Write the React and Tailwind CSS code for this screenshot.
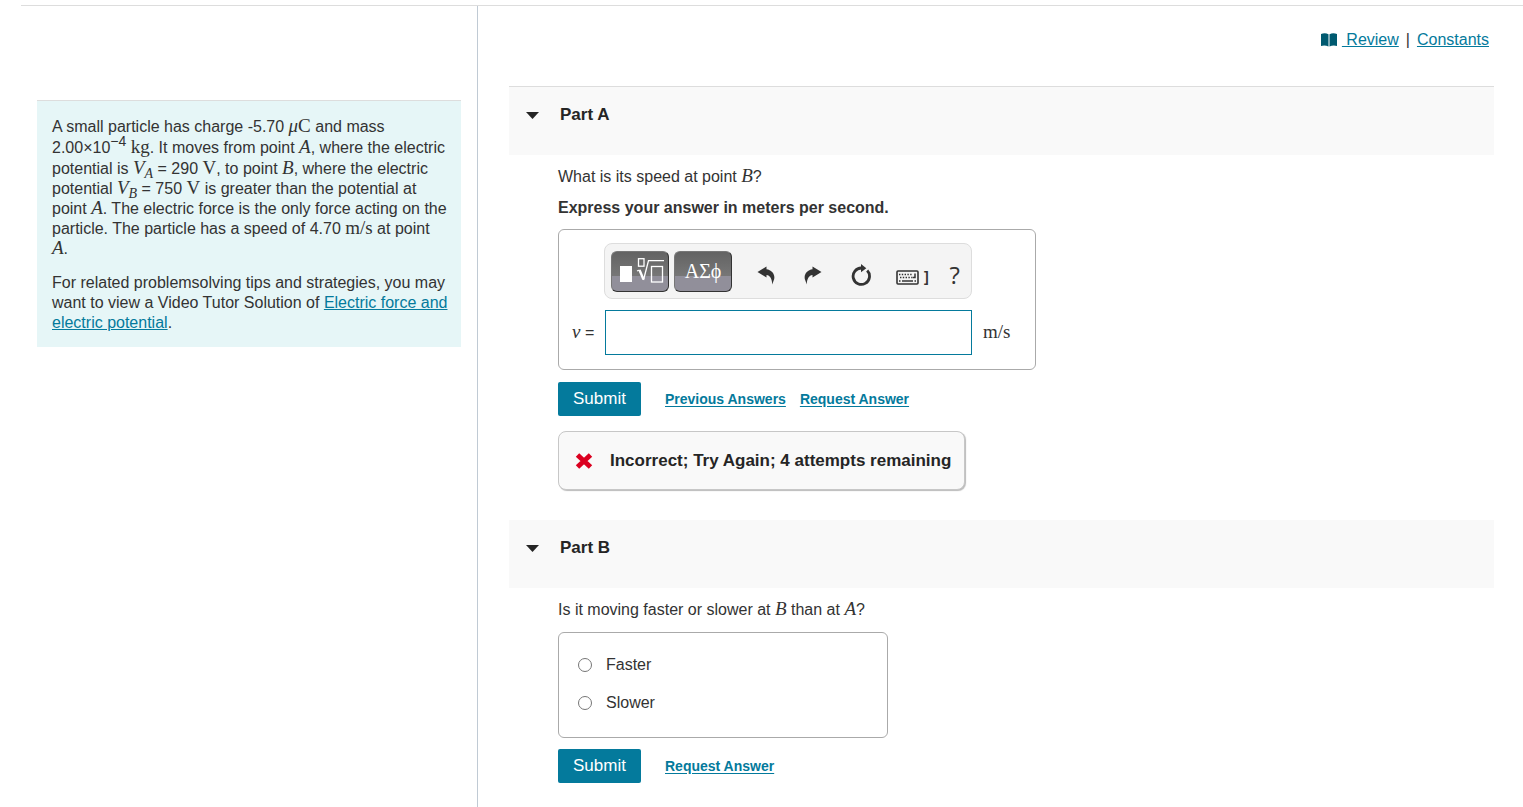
import React, { useState } from 'react';

// Math symbols are set in serif, variables in italics
const Sym = ({ children }) => (
  <span className="font-['Liberation_Serif',serif] text-[19px] leading-4">{children}</span>
);

const Var = ({ children, sub }) => (
  <i className="font-['Liberation_Serif',serif] text-[19px] leading-4">
    {children}
    {sub && <sub className="text-[14px]">{sub}</sub>}
  </i>
);

const Link = ({ children }) => (
  <a href="#" className="text-[#047a9c] underline">{children}</a>
);

const ActionLink = ({ children }) => (
  <a href="#" className="text-sm font-bold text-[#047a9c] underline underline-offset-2">{children}</a>
);

const SubmitButton = () => (
  <button type="button" className="h-[34px] w-[83px] rounded-xs bg-[#047a9c] text-[17px] leading-5 text-white">
    Submit
  </button>
);

const TemplateIcon = () => (
  <svg width="46" height="26" viewBox="0 0 46 26" fill="none" stroke="#fff" className="ml-1">
    <rect x="1" y="8" width="12" height="16" fill="#fff" stroke="none" />
    <rect x="19.5" y=".7" width="5.500" height="7.500" strokeWidth="1.3" />
    <path d="M18 13l2.500-1" strokeWidth="1.3" />
    <path d="M20.500 12l4 9.500" strokeWidth="2.4" />
    <path d="M24.500 22L29.5 2.700H45" strokeWidth="1.3" />
    <rect x="32.5" y="8.5" width="11" height="15.500" strokeWidth="1.3" />
  </svg>
);

const CurvedArrow = () => (
  <svg width="18" height="19" viewBox="0 0 18 19" fill="#333">
    <path d="M.5 6L9.5 .5V3.2C14.5 3.8 18.2 8 17.2 13L15.2 18.500C15.2 13 13 9.2 9.5 9V11.500Z" />
  </svg>
);

const ResetIcon = () => (
  <svg width="20" height="22" viewBox="0 0 20 22" fill="none">
    <path d="M10.5 4A8.2 8.2 0 1 0 16.200 6.500" stroke="#333" strokeWidth="2.8" />
    <path d="M10 0L15.300 4.200L10 8.200Z" fill="#333" />
  </svg>
);

const KeyboardIcon = () => (
  <svg width="23" height="15" viewBox="0 0 23 15" fill="none" stroke="#333">
    <rect x="1" y="1" width="21" height="13" rx="1" strokeWidth="1.6" />
    <path d="M3 4.500h14M4 7.500h13" strokeWidth="1.5" strokeDasharray="1.4 1.4" />
    <path d="M19 3.500v4h-2" strokeWidth="1.5" />
    <path d="M3 11h1.500M6 11h11M18.500 11H20" strokeWidth="1.5" />
  </svg>
);

const BookIcon = () => (
  <svg width="16" height="14" viewBox="0 0 16 14" fill="#005a70">
    <path d="M0 1Q4-.5 7.500 1.200V13.500Q4 12 0 13Z" />
    <path d="M16 1Q12-.5 8.500 1.200V13.500Q12 12 16 13Z" />
  </svg>
);

const CrossIcon = () => (
  <svg width="18" height="16" viewBox="0 0 18 16" fill="none" stroke="#db0020" strokeWidth="5">
    <path d="M2.500 2L15.500 14M15.500 2L2.500 14" />
  </svg>
);

const keyClass =
  'flex h-[41px] w-[58px] items-center justify-center rounded-md border border-t-[#777] border-r-[#333] border-b-[#333] border-l-[#777] bg-linear-to-b from-[#636363] from-0% via-[#777] via-62% to-[#918f9a] to-62%';

const Part = ({ title, border, children }) => {
  const [open, setOpen] = useState(true);

  return (
    <section>
      <div className={`bg-[#f9f9f9] ${border ? 'border-t border-[#ddd]' : ''}`}>
        <h2 className="h-[68px] pt-[18px]">
          <button
            type="button"
            aria-expanded={open}
            onClick={() => setOpen(!open)}
            className="flex items-center gap-[21px] pl-[17px] text-[17px] leading-5 font-bold text-[#252525]"
          >
            <svg width="13" height="7" viewBox="0 0 13 7" fill="#252525">
              <path d="M0 0H13L6.500 7Z" />
            </svg>
            {title}
          </button>
        </h2>
      </div>
      {open && <div className="pt-3 pl-[49px]">{children}</div>}
    </section>
  );
};

const App = () => {
  const [value, setValue] = useState('');
  const [choice, setChoice] = useState('');

  return (
    <div className="min-h-screen bg-white pt-[5px] pl-[21px] font-['Liberation_Sans',Arial,sans-serif] text-base leading-5 text-[#333]">
      <div className="flex min-h-[calc(100vh-5px)] border-t border-[#ddd]">
        {/* Problem statement */}
        <aside className="w-[457px] shrink-0 border-r border-[#c0cad4] px-4 pt-[94px]">
          <div className="border-t border-[#ddd] bg-[#e6f6f7] pt-4 pr-2 pb-[14px] pl-[15px]">
            <p>
              A small particle has charge -5.70 <Sym><i>μ</i>C</Sym> and mass
              <br />
              2.00×10<sup className="text-[14px] leading-[22px]">−4</sup> <Sym>kg</Sym>. It moves from point <Var>A</Var>, where the electric
              <br />
              potential is <Var sub="A">V</Var> = 290 <Sym>V</Sym>, to point <Var>B</Var>, where the electric
              <br />
              potential <Var sub="B">V</Var> = 750 <Sym>V</Sym> is greater than the potential at
              <br />
              point <Var>A</Var>. The electric force is the only force acting on the
              <br />
              particle. The particle has a speed of 4.70 <Sym>m/s</Sym> at point
              <br />
              <Var>A</Var>.
            </p>
            <p className="mt-[14px]">
              For related problemsolving tips and strategies, you may want to view a Video Tutor Solution
              of <Link>Electric force and electric potential</Link>.
            </p>
          </div>
        </aside>

        {/* Parts */}
        <main className="min-w-0 flex-1 pt-6 pr-[29px] pl-[31px]">
          <nav className="mb-9 flex items-center justify-end pr-[5px]">
            <BookIcon />
            <a href="#" className="ml-[5px] whitespace-pre text-[#047a9c] underline"> Review</a>
            <span className="px-[7px]">|</span>
            <Link>Constants</Link>
          </nav>

          <Part title="Part A" border>
            <p>What is its speed at point <Var>B</Var>?</p>
            <p className="mt-[11px] font-bold">Express your answer in meters per second.</p>

            <div className="mt-[11px] w-[478px] rounded-md border border-[#aaa] pt-[13px] pr-[19px] pb-[14px] pl-[13px]">
              <div className="ml-8 flex h-14 w-[368px] items-center rounded-lg border border-[#ddd] bg-[#f4f4f4] pl-[6px]">
                <button type="button" aria-label="Templates" className={keyClass}>
                  <TemplateIcon />
                </button>
                <button type="button" className={`${keyClass} ml-[5px] font-['Liberation_Serif',serif] text-xl text-white`}>
                  ΑΣϕ
                </button>
                <div className="flex flex-1 items-center justify-between pt-2 pr-[11px] pl-[25px]">
                  <button type="button" aria-label="Undo"><CurvedArrow /></button>
                  <button type="button" aria-label="Redo" className="ml-2 -scale-x-100"><CurvedArrow /></button>
                  <button type="button" aria-label="Reset" className="ml-2"><ResetIcon /></button>
                  <button type="button" aria-label="Keyboard shortcuts" className="ml-1 flex items-center gap-[5px] pt-1 text-sm font-bold">
                    <KeyboardIcon />
                    ]
                  </button>
                  <button type="button" aria-label="Help" className="font-['Open_Sans',sans-serif] text-2xl leading-6 font-medium">?</button>
                </div>
              </div>
              <div className="mt-[11px] flex items-center">
                <label htmlFor="speed" className="w-[33px] shrink-0">
                  <Var>v</Var> =
                </label>
                <input
                  id="speed"
                  type="text"
                  value={value}
                  onChange={(e) => setValue(e.target.value)}
                  className="h-[45px] w-[367px] border border-[#047a9c] bg-white px-2 outline-none"
                />
                <span className="ml-[11px]"><Sym>m/s</Sym></span>
              </div>
            </div>

            <div className="mt-3 flex items-center">
              <SubmitButton />
              <div className="ml-6 flex gap-[14px]">
                <ActionLink>Previous Answers</ActionLink>
                <ActionLink>Request Answer</ActionLink>
              </div>
            </div>

            <div className="mt-[15px] mb-[30px] flex h-[59px] w-[407px] items-center gap-[17px] rounded-lg border border-[#c7c7c7] bg-[#f9f9f9] pl-4 font-bold text-[#252525] shadow-[1px_1px_1px_#bbb]">
              <CrossIcon />
              <span className="text-[17px]">Incorrect; Try Again; 4 attempts remaining</span>
            </div>
          </Part>

          <Part title="Part B">
            <p>Is it moving faster or slower at <Var>B</Var> than at <Var>A</Var>?</p>
            <div className="mt-3 flex h-[106px] w-[330px] flex-col gap-[18px] rounded-md border border-[#aaa] pt-[22px] pl-[19px]">
              {['Faster', 'Slower'].map((option) => (
                <label key={option} className="flex items-center gap-[14px]">
                  <input
                    type="radio"
                    name="motion"
                    value={option}
                    checked={choice === option}
                    onChange={() => setChoice(option)}
                    className="size-[14px]"
                  />
                  {option}
                </label>
              ))}
            </div>
            <div className="mt-[11px] flex items-center">
              <SubmitButton />
              <div className="ml-6">
                <ActionLink>Request Answer</ActionLink>
              </div>
            </div>
          </Part>
        </main>
      </div>
    </div>
  );
};

export default App;
